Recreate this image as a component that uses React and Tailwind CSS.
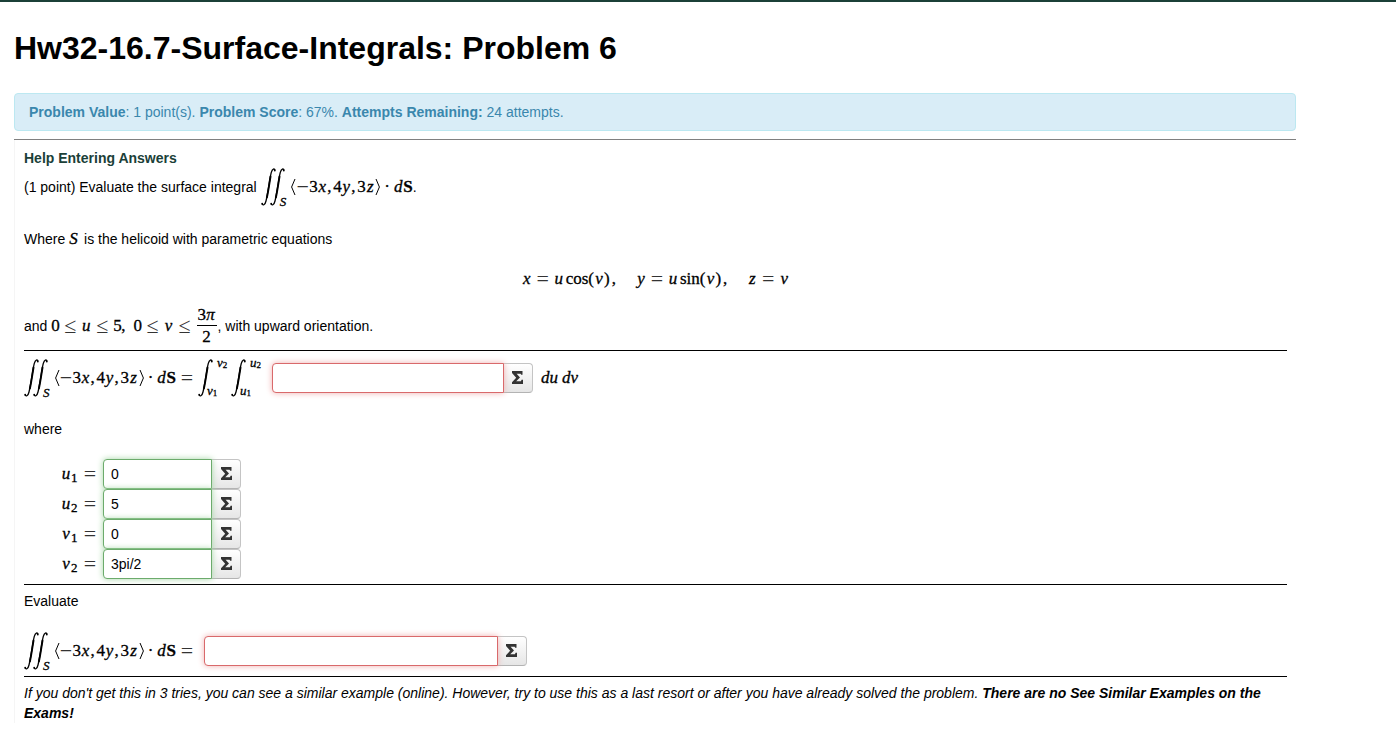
import React from "react";

const SERIF = "font-['Liberation_Serif','Times_New_Roman',serif]";

function Math({ className = "", children }) {
  return (
    <span className={`inline-flex items-center whitespace-nowrap text-[17px] leading-5 [-webkit-text-stroke:0.3px] ${SERIF} ${className}`}>
      {children}
    </span>
  );
}

/* Token boxes: digit, variable, comma, relation, subscript */
const N = ({ children }) => <span className="w-2 text-center">{children}</span>;
const V = ({ children }) => <i className="w-[10px] text-center">{children}</i>;
const C = () => <span className="w-1.5">,</span>;
const R = ({ children }) => (
  <span className="w-[22px] text-center text-[22px] text-[#333] [-webkit-text-stroke:0]">{children}</span>
);
const Sub = ({ children }) => <span className="relative top-1 w-2 text-[13px]">{children}</span>;

function Bracket({ close }) {
  return (
    <svg className="h-[18px] w-[6px]" viewBox="0 0 6 18" fill="none" stroke="currentColor" aria-hidden="true">
      <path d={close ? "M1 1 L4.4 9 L1 17" : "M5 1 L1.6 9 L5 17"} />
    </svg>
  );
}

function IntegralSign() {
  return (
    <svg className="h-[38px] w-[15px] shrink-0" viewBox="0 0 15 38" fill="none" stroke="currentColor" aria-hidden="true">
      <path d="M14.2 2.2 C13.4 .4 11.4 .4 10.3 4.4 C8.8 10 7 25 5 33 C4 37.4 1.8 37.6 .8 35.8" strokeWidth="1.3" />
      <path d="M9.6 8 C8.4 15 7.2 24 5.8 30" strokeWidth="1.9" />
      <circle cx="13.8" cy="2.6" r=".9" fill="currentColor" stroke="none" />
      <circle cx="1.2" cy="35.6" r=".9" fill="currentColor" stroke="none" />
    </svg>
  );
}

function SurfaceIntegral({ equals }) {
  return (
    <Math>
      <span className="flex">
        <IntegralSign />
        <span className="-ml-1.5 flex"><IntegralSign /></span>
        <i className="-mb-0.5 -ml-[5px] self-end text-[13px] leading-3">S</i>
      </span>
      <span className="w-1" />
      <Bracket />
      <span className="w-[13px] text-center text-[22px] text-[#333] [-webkit-text-stroke:0]">−</span>
      <N>3</N><V>x</V><C />
      <N>4</N><V>y</V><C />
      <N>3</N><V>z</V>
      <Bracket close />
      <span className="w-3 text-center">·</span>
      <V>d</V><b>S</b>
      {equals && <R>=</R>}
    </Math>
  );
}

function LimitIntegral({ name }) {
  return (
    <Math className="w-[33px]">
      <IntegralSign />
      <span className="flex h-[42px] flex-col justify-between text-[13px] leading-3">
        <span className="flex pl-1"><i>{name}</i><small className="pt-0.5 text-[9px]">2</small></span>
        <span className="-ml-1.5 flex"><i>{name}</i><small className="pt-0.5 text-[9px]">1</small></span>
      </span>
    </Math>
  );
}

function SigmaIcon() {
  return (
    <svg className="h-[13px] w-[11px]" viewBox="0 0 11 13" fill="#333" aria-hidden="true">
      <path d="M0 0H10.5V3.8H9.2L8.6 2.7H4.6L8 6.4L4.2 10.2H8.9L9.6 8.8H11V13H0V11.2L4.2 6.7L0 2Z" />
    </svg>
  );
}

function Answer({ label, value = "", width, ok }) {
  const tone = ok
    ? "border-[#6cab6c] shadow-[0_0_6px_#a5d6a5]"
    : "border-[#d9696b] shadow-[0_0_6px_#f0b0b0]";
  return (
    <span className="flex h-[30px]">
      <input
        aria-label={label}
        defaultValue={value}
        className={`relative h-[30px] rounded-l border bg-white px-[7px] text-[14px] text-black outline-none ${tone} ${width}`}
      />
      <button
        type="button"
        aria-label={`Equation editor for ${label}`}
        className="-ml-px flex h-[30px] w-[30px] items-center justify-center rounded-r border border-[#c4c4c4] border-b-[#b3b3b3] bg-linear-to-b from-white to-[#e6e6e6] pb-0.5"
      >
        <SigmaIcon />
      </button>
    </span>
  );
}

const LIMITS = [
  ["u", "1", "0"],
  ["u", "2", "5"],
  ["v", "1", "0"],
  ["v", "2", "3pi/2"],
];

export default function App() {
  return (
    <div className="min-h-screen border-t-2 border-[#1b4038] bg-white font-['Liberation_Sans',Arial,sans-serif] text-[14px] leading-5 text-black">
      <main className="mr-[100px] ml-3.5 pt-[26px]">
        <h1 className="text-[32px] leading-10 font-bold">Hw32-16.7-Surface-Integrals: Problem 6</h1>
        <div className="mt-[25px] rounded border border-[#bce8f1] bg-[#d9edf7] px-3.5 py-2 text-[#3a87ad]">
          <b>Problem Value</b>: 1 point(s). <b>Problem Score</b>: 67%. <b>Attempts Remaining:</b> 24 attempts.
        </div>

        <section className="mt-2 border-t border-[#808080]">
          <div className="border-l border-[#f5f5f5] px-[9px] pt-2">
            <a href="#help" className="block font-bold text-[#1b4038]">Help Entering Answers</a>
            <p className="flex h-[38px] items-center">
              <span className="mr-1">(1 point) Evaluate the surface integral</span>
              <SurfaceIntegral />.
            </p>

            <p className="mt-[23px]">
              Where <Math className="w-[11px]"><i>S</i></Math> is the helicoid with parametric equations
            </p>

            <div className="mt-5 flex justify-center">
              <Math>
                <V>x</V><R>=</R><V>u</V><span className="pl-0.5">cos(</span><V>v</V>)<span className="pl-0.5">,</span>
                <span className="w-5" />
                <V>y</V><R>=</R><V>u</V><span className="pl-0.5">sin(</span><V>v</V>)<span className="pl-0.5">,</span>
                <span className="w-5" />
                <V>z</V><R>=</R><V>v</V>
              </Math>
            </div>

            <div className="mt-[15px] flex h-[47px] items-center border-b border-black pb-0.5">
              and&nbsp;
              <Math>
                <N>0</N><R>≤</R><V>u</V><R>≤</R><N>5</N>,
                <span className="w-2" />
                <N>0</N><R>≤</R><V>v</V><R>≤</R>
                <span className="flex flex-col items-center px-px">
                  <span className="flex h-[22px] w-5 items-center justify-center border-b border-black"><N>3</N><V>π</V></span>
                  <span className="h-[22px] leading-[22px]">2</span>
                </span>
              </Math>
              , with upward orientation.
            </div>

            <div className="flex h-[54px] items-center">
              <SurfaceIntegral equals />
              <LimitIntegral name="v" />
              <LimitIntegral name="u" />
              <span className="w-2" />
              <Answer label="Integrand" width="w-[232px]" />
              <Math className="pl-2"><i>du</i><span className="w-1" /><i>dv</i></Math>
            </div>

            <p className="mt-3.5">where</p>

            <div className="mt-5 ml-[37px]">
              {LIMITS.map(([name, index, value]) => (
                <div key={name + index} className="flex items-center">
                  <Math className="w-[42px]"><V>{name}</V><Sub>{index}</Sub><R>=</R></Math>
                  <Answer label={`${name}${index}`} value={value} width="w-[109px]" ok />
                </div>
              ))}
            </div>

            <p className="mt-[5px] border-t border-black pt-1.5">Evaluate</p>

            <div className="mt-[17px] flex h-[46px] items-center">
              <SurfaceIntegral equals />
              <span className="w-1.5" />
              <Answer label="Surface integral value" width="w-[294px]" />
            </div>

            <p className="mt-0.5 border-t border-black pt-1.5 italic">
              If you don't get this in 3 tries, you can see a similar example (online). However, try to use this as a last resort
              or after you have already solved the problem. <b>There are no See Similar Examples on the Exams!</b>
            </p>
          </div>
        </section>
      </main>
    </div>
  );
}
